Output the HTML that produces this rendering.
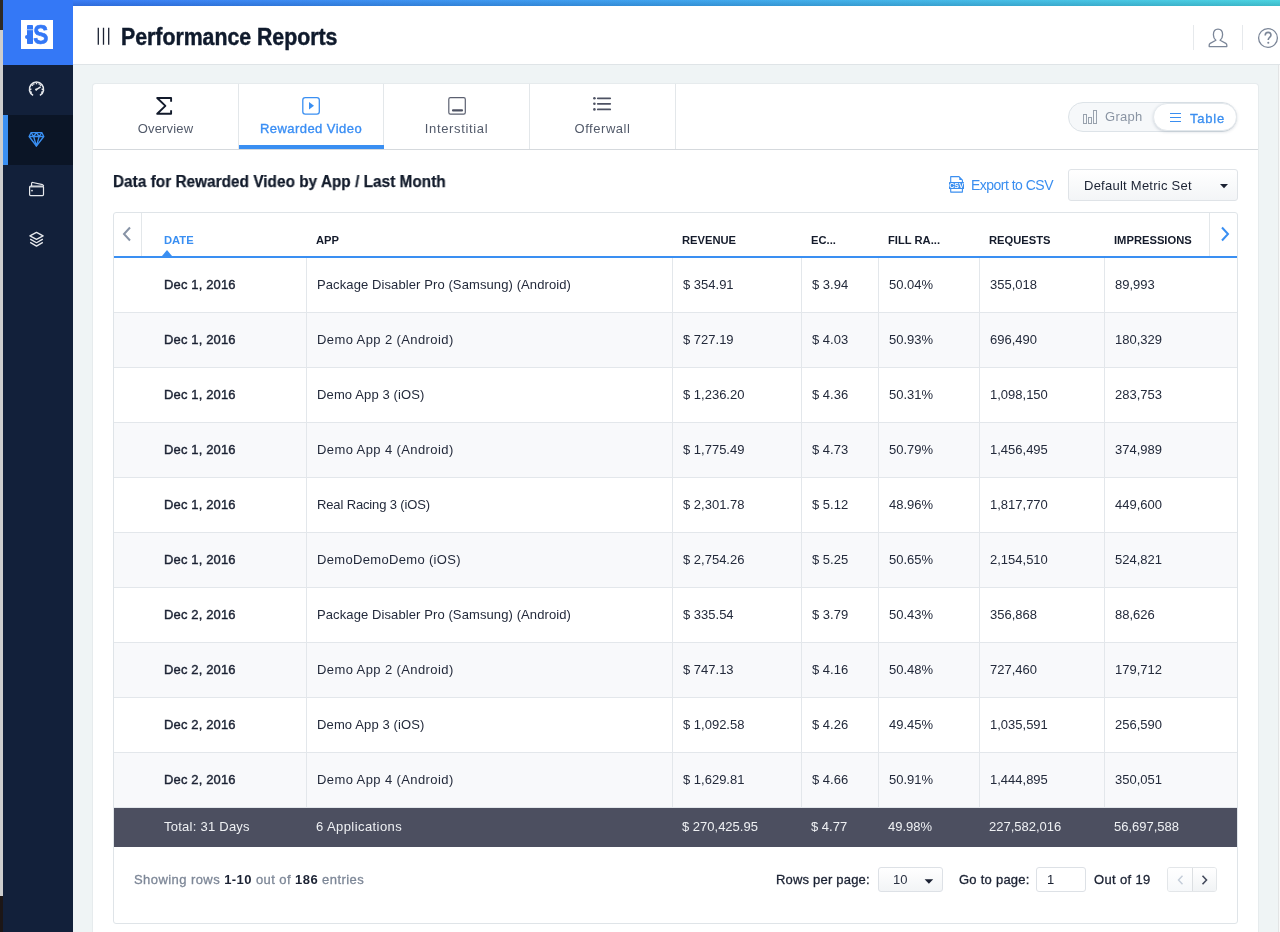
<!DOCTYPE html>
<html><head><meta charset="utf-8">
<style>
*{box-sizing:border-box;margin:0;padding:0}
html,body{width:1280px;height:932px;overflow:hidden}
body{position:relative;background:#eff4f5;font-family:"Liberation Sans",sans-serif;color:#1b2233}
.abs{position:absolute}
svg{display:block}
#strip{left:0;top:0;width:3px;height:932px;background:linear-gradient(#2e2a26 0,#2e2a26 30px,#cdcdcd 30px,#cdcdcd 896px,#1c1616 896px)}
#side{left:3px;top:0;width:70px;height:932px;background:#12203a}
#logo{left:0;top:0;width:70px;height:65px;background:#3478f6}
#rstrip{left:1278px;top:65px;width:2px;height:867px;background:linear-gradient(90deg,#e2e4e5 50%,#f8f8f8 50%)}
#logobox{left:18px;top:20px;width:32px;height:29px;background:#fff}
.sitem{left:0;width:70px;height:50px}
.sitem svg{position:absolute;left:25px;top:16px}
#act{background:#0b1526}
#act:before{content:"";position:absolute;left:0;top:0;width:5px;height:50px;background:#3a8ff2}
#topbar{left:73px;top:0;width:1207px;height:6px;background:linear-gradient(rgba(255,255,255,0.04),rgba(0,0,30,0.12)),linear-gradient(90deg,#3479f5,#3aa2ee 50%,#45d2df)}
#header{left:73px;top:6px;width:1207px;height:59px;background:#fff;border-bottom:1px solid #dfe4e7}
#title{left:48px;top:18px;font-size:23px;font-weight:bold;letter-spacing:0px;color:#0f1a2c;-webkit-text-stroke:0.45px #0f1a2c;transform:scaleX(0.925);transform-origin:0 0}
#ham{left:24px;top:21px}
.hsep{top:19px;width:1px;height:25px;background:#e6e9ec}
#card{left:93px;top:84px;width:1165px;height:900px;background:#fff;border-radius:3px;box-shadow:0 0 0 1px #e6ebed}
#tabs{left:0;top:0;width:1165px;height:66px;border-bottom:1px solid #d5d9dd}
.tab{top:0;height:65px;border-right:1px solid #e3e7ea;text-align:center;font-size:13px;color:#525a6a}
.tab .lbl{position:absolute;left:0;right:0;top:37px}
.tab.active .lbl{-webkit-text-stroke:0.35px currentColor}
.tab svg{position:absolute;left:50%;top:13px;transform:translateX(-50%)}
.tab.active{color:#3a8ef4}
.tab.active:after{content:"";position:absolute;left:0;right:-1px;top:61px;height:4px;background:#3a8ff2}
#toggle{left:975px;top:18px;width:169px;height:30px;border-radius:15px;background:#f6f8fa;border:1px solid #dde3e8}
#tgon{left:84px;top:0px;width:84px;height:28px;border-radius:14px;background:#fff;box-shadow:0 1px 3px rgba(40,60,90,.18);border:1px solid #e3e8ec}
.tglbl{font-size:13px;top:6px}
#ctitle{left:20px;top:89px;font-size:16px;font-weight:bold;color:#111a2a;letter-spacing:0.06px;-webkit-text-stroke:0.25px #111a2a;transform:scaleX(0.955);transform-origin:0 0}
#export{left:878px;top:93px;letter-spacing:-0.52px;font-size:14px;color:#3a8ef0}
#dd{left:975px;top:85px;width:170px;height:32px;border:1px solid #dfe3e7;border-radius:3px;background:linear-gradient(#fff,#f3f5f7);font-size:13px}
#tbl{left:113px;top:212px;width:1125px;height:712px;border:1px solid #dfe4e8;border-radius:3px;background:#fff;overflow:hidden}
#thead{left:0;top:0;width:1123px;height:45px;border-bottom:2px solid #3a8ff2}
#larr{left:0;top:0;width:28px;height:43px;border-right:1px solid #e3e7ea}
#larr svg{position:absolute;left:8px;top:13px}
#rarr{left:1095px;top:0;width:28px;height:43px;border-left:1px solid #e3e7ea}
#rarr svg{position:absolute;left:10px;top:13px}
.th{top:21px;font-size:11.2px;font-weight:bold;color:#141b2b;white-space:nowrap}
.th.sorted{color:#3a8ff2}
#sortarr{left:48px;top:37px;width:0;height:0;border-left:5px solid transparent;border-right:5px solid transparent;border-bottom:6px solid #3a8ff2}
.tr{left:0;width:1123px;height:55px;border-bottom:1px solid #e3e7eb}
.td{top:19px;font-size:13px;color:#232a3b;white-space:nowrap}
.td.b{font-weight:normal;color:#1b2233;-webkit-text-stroke:0.4px #1b2233;letter-spacing:0.15px}
.vd{top:45px;width:1px;height:550px;background:#e3e7eb}
#ttot{left:0;top:595px;width:1123px;height:39px;background:#4c4f60}
.tt{top:11px;font-size:13px;color:#eef0f3;white-space:nowrap}
.ft{font-size:13px;white-space:nowrap}
#rpp{left:764px;top:654px;width:65px;height:25px;border:1px solid #dde1e6;border-radius:3px;background:linear-gradient(#fff,#f2f4f6);font-size:13px;color:#2a3142}
#gtp{left:922px;top:654px;width:50px;height:25px;border:1px solid #dde1e6;border-radius:3px;background:#fff;font-size:13px;color:#1b2233}
#pager{left:1053px;top:654px;width:50px;height:25px;border:1px solid #e3e6e9;border-radius:3px;overflow:hidden}
.pbtn{top:0;width:25px;height:23px;background:linear-gradient(#fff,#f6f8fa)}

.sb{-webkit-text-stroke:0.3px currentColor}
.td.app{letter-spacing:0.1px}
.sb b{-webkit-text-stroke:0}

</style></head>
<body>
<div id="root" class="abs" style="left:0;top:0;width:1280px;height:932px;will-change:transform">
<div id="strip" class="abs"></div>
<div id="side" class="abs">
  <div id="logo" class="abs"></div>
  <div class="sitem abs" id="act" style="top:115px"></div>
</div>
<div id="rstrip" class="abs"></div>
<div id="topbar" class="abs"></div>
<div id="header" class="abs">
  <div id="title" class="abs">Performance Reports</div>
  <div class="hsep abs" style="left:1120px"></div>
  <div class="hsep abs" style="left:1169px"></div>
</div>
<div id="card" class="abs">
  <div id="tabs" class="abs">
    <div class="tab abs" style="left:0;width:146px"><div class="lbl" style="letter-spacing:0.15px">Overview</div></div>
    <div class="tab abs active" style="left:146px;width:145px"><div class="lbl" style="letter-spacing:0.45px">Rewarded Video</div></div>
    <div class="tab abs" style="left:291px;width:146px"><div class="lbl" style="letter-spacing:0.65px">Interstitial</div></div>
    <div class="tab abs" style="left:437px;width:146px"><div class="lbl" style="letter-spacing:0.55px">Offerwall</div></div>
    <div id="toggle" class="abs">
      <div class="tglbl abs" style="left:36px;top:6px;color:#8a94a3;letter-spacing:0.3px">Graph</div>
      <div id="tgon" class="abs"><div class="tglbl abs sb" style="left:36px;top:7px;color:#3a8ef0;letter-spacing:0.8px">Table</div></div>
    </div>
  </div>
  <div id="ctitle" class="abs">Data for Rewarded Video by App / Last Month</div>
  <div id="export" class="abs">Export to CSV</div>
  <div id="dd" class="abs"><div class="abs" style="left:15px;top:8px;letter-spacing:0.25px">Default Metric Set</div></div>
</div>
<svg class="abs" style="left:0;top:0" width="1280" height="932" viewBox="0 0 1280 932">
  <!-- logo -->
  <rect x="21" y="20" width="32" height="29" fill="#fff"/>
  <rect x="27" y="25" width="6" height="19" rx="0.8" fill="#3478f6"/>
  <circle cx="27" cy="37" r="2" fill="#3478f6"/>
  <rect x="26.5" y="29.3" width="7" height="0.9" fill="#bcd3fb"/>
  <text x="33.2" y="43.8" font-family="Liberation Sans" font-weight="bold" font-size="27" fill="#3478f6" stroke="#3478f6" stroke-width="0.7" transform="translate(33.2 43.8) scale(0.84 1) translate(-33.2 -43.8)">S</text>
  <!-- hamburger -->
  <path d="M98.3 27.8v17M103.5 27.8v17M108.7 27.8v17" stroke="#1b2233" stroke-width="1.3"/>
  <!-- gauge -->
  <g stroke="#e6e8ec" fill="none" stroke-width="1.4">
    <path d="M33.1 95.4A7.1 7.1 0 1 1 39.9 95.4" stroke-width="1.6"/>
    <path d="M36.5 82.8v1.4M31.9 84.7l1 1M41.1 84.7l-1 1M30 89.2h1.4M43 89.2h-1.4M30.6 92.4l1.2-.6M42.4 92.4l-1.2-.6M33.5 83.4l.6 1.2M39.5 83.4l-.6 1.2"/>
    <path d="M36.3 89.6L40.2 87.2" stroke-width="1.5" stroke-linecap="round"/>
  </g>
  <circle cx="36.2" cy="89.6" r="1.1" fill="#e6e8ec"/>
  <!-- diamond -->
  <g stroke="#3a8ff2" fill="none" stroke-width="1.3" stroke-linejoin="round">
    <path d="M31.1 132.6h10.7l2 3.9l-7.4 9.5l-7.3-9.5z"/>
    <path d="M29.2 136.5h14.6M31.1 132.6l2.5 3.9l2.8-3.9l2.8 3.9l2.6-3.9M33.6 136.5l2.8 9.5l2.8-9.5"/>
  </g>
  <!-- wallet -->
  <g stroke="#e6e8ec" fill="none" stroke-width="1.2" stroke-linejoin="round">
    <rect x="29.6" y="186" width="13.9" height="9.6" rx="1"/>
    <path d="M31.6 186v-2.6q0-1.1 1.2-.9l9.8 2.2q1 .3 1 1.4"/>
    <path d="M30 186.8h13"/>
  </g>
  <circle cx="32" cy="190.6" r="0.9" fill="#e6e8ec"/>
  <!-- layers -->
  <g stroke="#e6e8ec" fill="none" stroke-width="1.3" stroke-linejoin="round">
    <path d="M36.5 232.4l6.6 3.5l-6.6 3.5l-6.6-3.5z"/>
    <path d="M30.2 239.1l6.3 3.6l6.3-3.6"/>
    <path d="M30.2 242.4l6.3 3.7l6.3-3.7"/>
  </g>
  <!-- user -->
  <g stroke="#7b8698" fill="none" stroke-width="1.3" stroke-linejoin="round">
    <path d="M1215.9 40.3C1214.4 39.1 1213.4 37 1213.4 34.7C1213.4 31.3 1215.4 29.2 1218 29.2S1222.6 31.3 1222.6 34.7C1222.6 37 1221.6 39.1 1220.1 40.3L1225.8 43.4C1226.5 43.8 1226.8 44.3 1226.8 45V46.6H1209.2V45C1209.2 44.3 1209.5 43.8 1210.2 43.4Z"/>
  </g>
  <!-- help -->
  <circle cx="1268" cy="38" r="9.4" stroke="#7b8698" stroke-width="1.3" fill="none"/>
  <path d="M1265.2 35.4c0-1.8 1.2-3 2.9-3s2.9 1.1 2.9 2.7c0 2.1-2.7 2.3-2.7 4.4v.5" stroke="#7b8698" stroke-width="1.6" fill="none"/>
  <circle cx="1268.3" cy="42.7" r="1.05" fill="#7b8698"/>
  <!-- sigma -->
  <path d="M171.1 101.8V98h-13.9l8.2 7.9l-8.2 7.9h13.9v-3.6" stroke="#121a2b" stroke-width="1.9" fill="none" stroke-linejoin="round"/>
  <!-- play box -->
  <rect x="302.8" y="97.6" width="16.5" height="16.6" rx="2.4" stroke="#3a8ff2" stroke-width="1.3" fill="none"/>
  <path d="M309 102v7.6l5-3.8z" fill="#3a8ff2"/>
  <!-- interstitial -->
  <rect x="448.8" y="97.6" width="16.5" height="16.6" rx="1.6" stroke="#5b6070" stroke-width="1.2" fill="none"/>
  <path d="M453 110.4h9" stroke="#4d5263" stroke-width="2.1" stroke-linecap="round"/>
  <!-- list -->
  <g fill="#4d5263"><circle cx="594.4" cy="98.3" r="1.3"/><circle cx="594.4" cy="103.8" r="1.3"/><circle cx="594.4" cy="109.4" r="1.3"/></g>
  <path d="M597.8 98.3h12.4M597.8 103.8h12.4M597.8 109.4h12.4" stroke="#4d5263" stroke-width="1.8" stroke-linecap="round"/>
  <!-- graph icon -->
  <g stroke="#99a2ae" stroke-width="1" fill="none">
    <rect x="1083.5" y="114.5" width="3" height="9"/>
    <rect x="1088.5" y="117.5" width="3" height="6"/>
    <rect x="1093.5" y="110.5" width="3" height="13"/>
  </g>
  <!-- table icon -->
  <path d="M1170 113.5h11M1170 117.5h11M1170 121.5h11" stroke="#3a8ef0" stroke-width="1.1"/>
  <!-- export icon -->
  <g stroke="#3a8ef0" stroke-width="1.1" fill="none" stroke-linejoin="round">
    <path d="M950.7 182v-5.4h8.3l3.4 3.6v1.8M950.7 189v3.1h11.7v-3.1"/>
  </g>
  <path d="M959.3 176.8l3.1 3.3h-3.1z" fill="#3a8ef0"/>
  <rect x="949" y="182" width="15" height="7" rx="0.6" fill="#3a8ef0"/>
  <text x="956.5" y="188" font-family="Liberation Sans" font-weight="bold" font-size="7" fill="#fff" text-anchor="middle">CSV</text>
  <!-- dd caret -->
  <path d="M1220 184h8l-4 4.3z" fill="#1b2233"/>
</svg>

<div id="tbl" class="abs"><div id="thead" class="abs"><div class="abs" id="larr"><svg width="10" height="16" viewBox="0 0 10 16"><path d="M8 1.5L2 8l6 6.5" fill="none" stroke="#8793a6" stroke-width="2"/></svg></div><div class="abs" id="rarr"><svg width="10" height="16" viewBox="0 0 10 16"><path d="M2 1.5L8 8l-6 6.5" fill="none" stroke="#3a8ff2" stroke-width="2"/></svg></div><div class="th abs sorted" style="left:50px">DATE</div><div class="th abs" style="left:202px">APP</div><div class="th abs" style="left:568px">REVENUE</div><div class="th abs" style="left:697px">EC...</div><div class="th abs" style="left:774px">FILL RA...</div><div class="th abs" style="left:875px">REQUESTS</div><div class="th abs" style="left:1000px">IMPRESSIONS</div><div id="sortarr" class="abs"></div></div><div class="tr abs" style="top:45px;background:#fff"><div class="td abs b" style="left:50px">Dec 1, 2016</div><div class="td abs" style="left:203px;letter-spacing:0.1px">Package Disabler Pro (Samsung) (Android)</div><div class="td abs" style="left:569px">$ 354.91</div><div class="td abs" style="left:698px">$ 3.94</div><div class="td abs" style="left:775px">50.04%</div><div class="td abs" style="left:876px">355,018</div><div class="td abs" style="left:1001px">89,993</div></div><div class="tr abs" style="top:100px;background:#f8f9fb"><div class="td abs b" style="left:50px">Dec 1, 2016</div><div class="td abs" style="left:203px;letter-spacing:0.4px">Demo App 2 (Android)</div><div class="td abs" style="left:569px">$ 727.19</div><div class="td abs" style="left:698px">$ 4.03</div><div class="td abs" style="left:775px">50.93%</div><div class="td abs" style="left:876px">696,490</div><div class="td abs" style="left:1001px">180,329</div></div><div class="tr abs" style="top:155px;background:#fff"><div class="td abs b" style="left:50px">Dec 1, 2016</div><div class="td abs" style="left:203px;letter-spacing:0.13px">Demo App 3 (iOS)</div><div class="td abs" style="left:569px">$ 1,236.20</div><div class="td abs" style="left:698px">$ 4.36</div><div class="td abs" style="left:775px">50.31%</div><div class="td abs" style="left:876px">1,098,150</div><div class="td abs" style="left:1001px">283,753</div></div><div class="tr abs" style="top:210px;background:#f8f9fb"><div class="td abs b" style="left:50px">Dec 1, 2016</div><div class="td abs" style="left:203px;letter-spacing:0.4px">Demo App 4 (Android)</div><div class="td abs" style="left:569px">$ 1,775.49</div><div class="td abs" style="left:698px">$ 4.73</div><div class="td abs" style="left:775px">50.79%</div><div class="td abs" style="left:876px">1,456,495</div><div class="td abs" style="left:1001px">374,989</div></div><div class="tr abs" style="top:265px;background:#fff"><div class="td abs b" style="left:50px">Dec 1, 2016</div><div class="td abs" style="left:203px;letter-spacing:-0.14px">Real Racing 3 (iOS)</div><div class="td abs" style="left:569px">$ 2,301.78</div><div class="td abs" style="left:698px">$ 5.12</div><div class="td abs" style="left:775px">48.96%</div><div class="td abs" style="left:876px">1,817,770</div><div class="td abs" style="left:1001px">449,600</div></div><div class="tr abs" style="top:320px;background:#f8f9fb"><div class="td abs b" style="left:50px">Dec 1, 2016</div><div class="td abs" style="left:203px;letter-spacing:0.33px">DemoDemoDemo (iOS)</div><div class="td abs" style="left:569px">$ 2,754.26</div><div class="td abs" style="left:698px">$ 5.25</div><div class="td abs" style="left:775px">50.65%</div><div class="td abs" style="left:876px">2,154,510</div><div class="td abs" style="left:1001px">524,821</div></div><div class="tr abs" style="top:375px;background:#fff"><div class="td abs b" style="left:50px">Dec 2, 2016</div><div class="td abs" style="left:203px;letter-spacing:0.1px">Package Disabler Pro (Samsung) (Android)</div><div class="td abs" style="left:569px">$ 335.54</div><div class="td abs" style="left:698px">$ 3.79</div><div class="td abs" style="left:775px">50.43%</div><div class="td abs" style="left:876px">356,868</div><div class="td abs" style="left:1001px">88,626</div></div><div class="tr abs" style="top:430px;background:#f8f9fb"><div class="td abs b" style="left:50px">Dec 2, 2016</div><div class="td abs" style="left:203px;letter-spacing:0.4px">Demo App 2 (Android)</div><div class="td abs" style="left:569px">$ 747.13</div><div class="td abs" style="left:698px">$ 4.16</div><div class="td abs" style="left:775px">50.48%</div><div class="td abs" style="left:876px">727,460</div><div class="td abs" style="left:1001px">179,712</div></div><div class="tr abs" style="top:485px;background:#fff"><div class="td abs b" style="left:50px">Dec 2, 2016</div><div class="td abs" style="left:203px;letter-spacing:0.13px">Demo App 3 (iOS)</div><div class="td abs" style="left:569px">$ 1,092.58</div><div class="td abs" style="left:698px">$ 4.26</div><div class="td abs" style="left:775px">49.45%</div><div class="td abs" style="left:876px">1,035,591</div><div class="td abs" style="left:1001px">256,590</div></div><div class="tr abs" style="top:540px;background:#f8f9fb"><div class="td abs b" style="left:50px">Dec 2, 2016</div><div class="td abs" style="left:203px;letter-spacing:0.4px">Demo App 4 (Android)</div><div class="td abs" style="left:569px">$ 1,629.81</div><div class="td abs" style="left:698px">$ 4.66</div><div class="td abs" style="left:775px">50.91%</div><div class="td abs" style="left:876px">1,444,895</div><div class="td abs" style="left:1001px">350,051</div></div><div class="vd abs" style="left:192px"></div><div class="vd abs" style="left:558px"></div><div class="vd abs" style="left:687px"></div><div class="vd abs" style="left:764px"></div><div class="vd abs" style="left:865px"></div><div class="vd abs" style="left:990px"></div><div id="ttot" class="abs"><div class="tt abs" style="left:50px;letter-spacing:0.25px">Total: 31 Days</div><div class="tt abs" style="left:202px;letter-spacing:0.42px">6 Applications</div><div class="tt abs" style="left:568px">$ 270,425.95</div><div class="tt abs" style="left:697px">$ 4.77</div><div class="tt abs" style="left:774px">49.98%</div><div class="tt abs" style="left:875px">227,582,016</div><div class="tt abs" style="left:1000px">56,697,588</div></div><div class="ft abs sb" style="left:20px;top:659px;color:#7d8797;letter-spacing:0.43px">Showing rows <b style="color:#1b2233">1-10</b> out of <b style="color:#1b2233">186</b> entries</div>
<div class="ft abs sb" style="left:662px;top:659px;color:#1b2233;letter-spacing:0.2px">Rows per page:</div>
<div id="rpp" class="abs"><span class="abs" style="left:14px;top:4px">10</span><svg class="abs" style="left:45px;top:10px" width="10" height="7" viewBox="0 0 10 7"><path d="M0.6 1.2h8.6l-4.3 4.6z" fill="#1b2233"/></svg></div>
<div class="ft abs sb" style="left:845px;top:659px;color:#1b2233;letter-spacing:0.25px">Go to page:</div>
<div id="gtp" class="abs"><span class="abs" style="left:10px;top:4px">1</span></div>
<div class="ft abs sb" style="left:980px;top:659px;color:#1b2233;letter-spacing:0.35px">Out of 19</div>
<div id="pager" class="abs">
  <div class="abs pbtn" style="left:0;border-right:1px solid #dcdfe2"><svg class="abs" style="left:9px;top:7px" width="7" height="10" viewBox="0 0 7 10"><path d="M5.5 0.8L1.5 5l4 4.2" stroke="#c3ccd8" stroke-width="1.4" fill="none"/></svg></div>
  <div class="abs pbtn" style="left:25px;background:linear-gradient(#fff,#f1f3f5)"><svg class="abs" style="left:8px;top:7px" width="7" height="10" viewBox="0 0 7 10"><path d="M1.5 0.8L5.5 5l-4 4.2" stroke="#444a5c" stroke-width="1.6" fill="none"/></svg></div>
</div>
</div>
</div>
</body></html>
